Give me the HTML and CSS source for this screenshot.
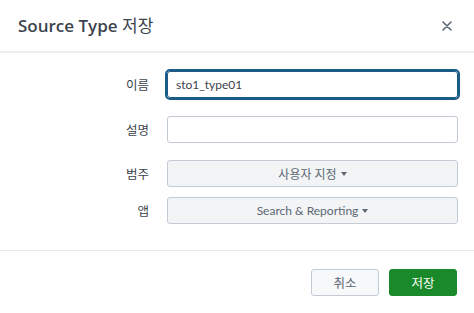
FILE: index.html
```html
<!DOCTYPE html>
<html lang="ko">
<head>
<meta charset="utf-8">
<link rel="stylesheet" href="styles.css">
</head>
<body>
<div class="modal">
  <div class="header">
    <h1 class="title"><span class="title-en">Source Type</span> 저장</h1>
    <span class="close">
      <svg width="10" height="10" viewBox="0 0 10 10"><path d="M1 1 L9 9 M9 1 L1 9" stroke="#5c6773" stroke-width="1.6" stroke-linecap="round"/></svg>
    </span>
  </div>
  <div class="body">
    <div class="row row-name">
      <label class="label">이름</label>
      <div class="control input focused">sto1_type01</div>
    </div>
    <div class="row row-desc">
      <label class="label">설명</label>
      <div class="control input"></div>
    </div>
    <div class="row row-cat">
      <label class="label">범주</label>
      <div class="control select">사용자 지정 <span class="caret"></span></div>
    </div>
    <div class="row row-app">
      <label class="label">앱</label>
      <div class="control select">Search &amp; Reporting <span class="caret"></span></div>
    </div>
  </div>
  <div class="footer">
    <button class="btn btn-cancel">취소</button>
    <button class="btn btn-save">저장</button>
  </div>
</div>
</body>
</html>
```
FILE: styles.css
```css
html, body {
  margin: 0;
  padding: 0;
  background: #fff;
}
body {
  font-family: "Lato", "Noto Sans CJK KR", sans-serif;
  color: #3c444d;
  width: 474px;
  height: 313px;
  overflow: hidden;
}
.modal {
  display: flex;
  flex-direction: column;
}
.header {
  height: 51px;
  border-bottom: 2px solid #eeeeee;
  display: flex;
  align-items: center;
  justify-content: space-between;
  padding: 0 22px 0 18px;
}
.title {
  margin: 0;
  font-family: "Open Sans", "Noto Sans CJK KR", sans-serif;
  font-size: 17px;
  font-weight: 400;
  color: #3c444d;
  line-height: 20px;
}
.title-en {
  font-weight: 600;
}
.close {
  display: flex;
  width: 10px;
  height: 10px;
}
.body {
  display: flex;
  flex-direction: column;
  padding-top: 18px;
  padding-bottom: 26px;
  border-bottom: 1px solid #e3e6ea;
}
.row {
  display: flex;
  align-items: center;
}
.row-desc { margin-top: 18px; }
.row-cat { margin-top: 17px; }
.row-app { margin-top: 10px; }
.label {
  width: 167px;
  flex: none;
  text-align: right;
  font-size: 12.5px;
  color: #3c444d;
  padding-right: 18px;
  box-sizing: border-box;
}
.control {
  box-sizing: border-box;
  width: 291px;
  height: 27px;
  border-radius: 3px;
  font-size: 12px;
  display: flex;
  align-items: center;
}
.input {
  border: 1px solid #c3cbd4;
  background: #fff;
  padding-left: 8px;
  color: #3c444d;
}
.input.focused {
  border: 1px solid #1c5a88;
  outline: 2px solid #1c5a88;
  outline-offset: 0;
}
.select {
  border: 1px solid #c3cbd4;
  background: #f2f4f5;
  justify-content: center;
  color: #5c6773;
}
.caret {
  display: inline-block;
  width: 0;
  height: 0;
  border-left: 3.5px solid transparent;
  border-right: 3.5px solid transparent;
  border-top: 4px solid #5c6773;
  margin-left: 4px;
  margin-top: 1px;
}
.footer {
  display: flex;
  justify-content: flex-end;
  gap: 10px;
  padding: 18px 17px 0 0;
}
.btn {
  width: 68px;
  height: 27px;
  border-radius: 3px;
  font-family: "Lato", "Noto Sans CJK KR", sans-serif;
  font-size: 12.5px;
  padding: 0;
  cursor: pointer;
}
.btn-cancel {
  background: #f7f8fa;
  border: 1px solid #c3cbd4;
  color: #5c6773;
}
.btn-save {
  background: #1a8929;
  border: 1px solid #1a8929;
  color: #fff;
}
```
